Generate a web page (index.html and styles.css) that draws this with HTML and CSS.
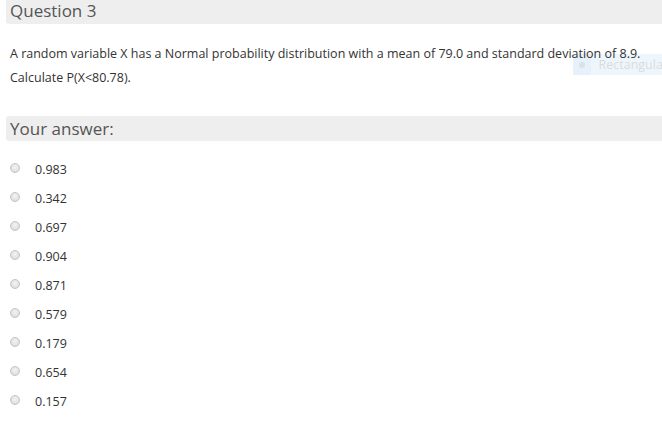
FILE: index.html
```html
<!DOCTYPE html>
<html>
<head>
<meta charset="utf-8">
<link rel="stylesheet" href="styles.css">
</head>
<body>
<div class="page">
  <div class="qhead">Question 3</div>
  <div class="qtext">
    <div class="tip"><span class="tipicon"><span class="dot"></span></span><span class="tiplabel">Rectangular</span></div>
    <p class="line">A random variable X has a Normal probability distribution with a mean of 79.0 and standard deviation of 8.9.</p>
    <p class="line">Calculate P(X&lt;80.78).</p>
  </div>
  <div class="ahead">Your answer:</div>
  <ul class="opts">
    <li class="opt"><span class="radio"></span>0.983</li>
    <li class="opt"><span class="radio"></span>0.342</li>
    <li class="opt"><span class="radio"></span>0.697</li>
    <li class="opt"><span class="radio"></span>0.904</li>
    <li class="opt"><span class="radio"></span>0.871</li>
    <li class="opt"><span class="radio"></span>0.579</li>
    <li class="opt"><span class="radio"></span>0.179</li>
    <li class="opt"><span class="radio"></span>0.654</li>
    <li class="opt"><span class="radio"></span>0.157</li>
  </ul>
</div>
</body>
</html>
```
FILE: styles.css
```css
html, body { margin: 0; padding: 0; background: #fff; }
body { font-family: "Open Sans", "DejaVu Sans", sans-serif; color: #333; width: 662px; height: 423px; overflow: hidden; }
.page { padding-left: 6px; }
.qhead {
  background: #eeeeee;
  height: 24px;
  line-height: 22px;
  font-size: 17px;
  color: #555;
  padding-left: 4px;
  border-bottom-left-radius: 3px;
}
.qtext { position: relative; padding-top: 18px; padding-left: 4px; font-size: 12.5px; color: #333; }
.line { position: relative; z-index: 1; margin: 0; height: 24px; line-height: 24px; }
.tip {
  position: absolute; left: 567px; top: 30px; width: 95px; height: 21px;
  background: #eef6fd; color: #dcdcdc; font-size: 12.5px; line-height: 21px;
  display: flex; align-items: center; overflow: hidden; white-space: nowrap;
}
.tipicon { width: 22px; height: 21px; background: #e6f1fc; display: flex; align-items: center; justify-content: center; margin-right: 8px; }
.dot { width: 6px; height: 6px; border-radius: 50%; background: #e0e0e0; }
.ahead {
  margin-top: 26px;
  background: #eeeeee;
  height: 25px;
  line-height: 25px;
  font-size: 17px;
  color: #555;
  padding-left: 4px;
  border-bottom-left-radius: 3px;
  border-top-left-radius: 3px;
}
.opts { list-style: none; margin: 0; padding: 14px 0 0 4px; }
.opt { height: 29px; display: flex; align-items: center; font-size: 12.5px; color: #333; }
.radio {
  width: 8px; height: 8px; border-radius: 50%;
  border: 1px solid #c4c4c4;
  background: radial-gradient(circle at 50% 40%, #f4f4f4, #d6d6d6);
  margin-right: 15px; margin-top: -4px;
}
```
